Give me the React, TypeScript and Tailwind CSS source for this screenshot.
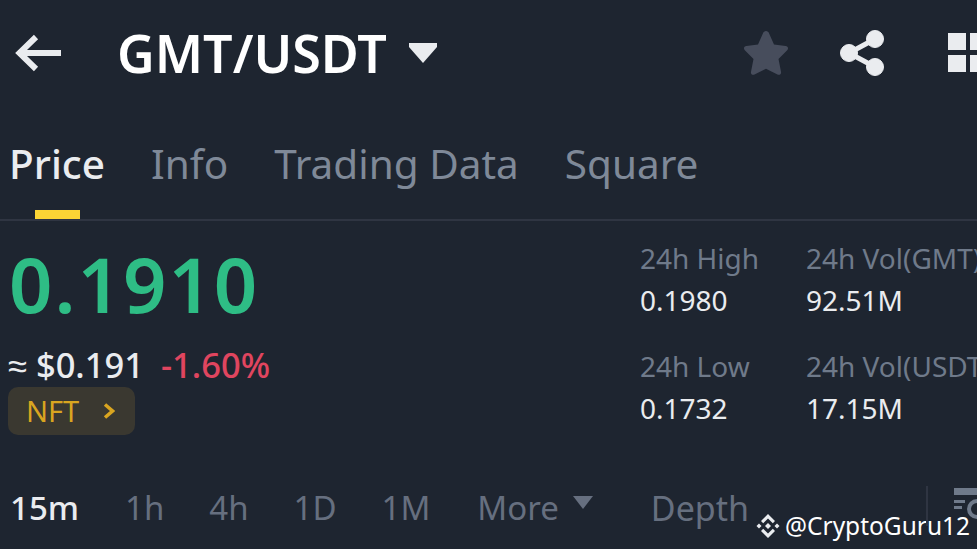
import React from "react";

const tabs = ["Info", "Trading Data", "Square"];
const intervals = ["1h", "4h", "1D", "1M"];

const Stat = ({ label, value }: { label: string; value: string }) => (
  <div className="flex flex-col whitespace-nowrap">
    <span className="text-[28px] leading-[38px] text-[#6f7a8a]">{label}</span>
    <span className="mt-[4px] text-[28px] leading-[38px] text-[#eaecef]">{value}</span>
  </div>
);

export default function App() {
  return (
    <div className="h-[549px] w-[977px] overflow-hidden bg-[#1e2530] font-['Noto_Sans',sans-serif] relative">
      {/* top bar */}
      <div className="flex h-[105px] items-center">
        <svg className="ml-[15px] w-[47px] h-[38px] shrink-0" viewBox="0 0 47 38" fill="none" stroke="#eaecef" strokeWidth="6">
          <path d="M46 19H5M21 3L4.500 19L21 35" />
        </svg>
        <span className="ml-[55px] shrink-0 text-[52px] leading-none font-semibold text-white">GMT/USDT</span>
        <svg className="ml-[21px] w-[30px] h-[22px] shrink-0" viewBox="0 0 30 22" fill="#eaecef">
          <path d="M1 1H29V5L15 21L1 5Z" />
        </svg>
        <svg className="ml-[304px] w-[48px] h-[48px] shrink-0" viewBox="0 0 48 48" fill="#474d5c">
          <path d="M24 2C25.500 2 26.500 3 27 4.200L32 15.500L43.500 17C46 17.400 46.800 19.500 45.200 21.200L36.500 30L39 42.800C39.500 45 37.600 46.500 35.500 45.500L24 39.800L12.500 45.500C10.400 46.500 8.500 45 9 42.800L11.500 30L2.800 21.200C1.200 19.500 2 17.400 4.500 17L16 15.500L21 4.200C21.500 3 22.500 2 24 2Z" />
        </svg>
        <svg className="ml-[50px] w-[46px] h-[46px] shrink-0" viewBox="0 0 46 46" fill="#eaecef" stroke="#eaecef">
          <circle cx="9" cy="23" r="8.500" />
          <circle cx="35" cy="9" r="8.500" />
          <circle cx="35" cy="37" r="8.500" />
          <path d="M9 23L35 9M9 23L35 37" strokeWidth="5" fill="none" />
        </svg>
        <div className="ml-[62px] grid shrink-0 grid-cols-[18px_18px] gap-x-[4px] gap-y-[5px]">
          <div className="h-[17px] bg-[#eaecef]" />
          <div className="h-[17px] bg-[#eaecef]" />
          <div className="h-[17px] bg-[#eaecef]" />
          <div className="h-[17px] bg-[#eaecef]" />
        </div>
      </div>

      {/* tabs */}
      <div className="flex h-[116px] items-start border-b-2 border-[#2f3542] pl-[10px] pt-[34px] text-[40.500px] leading-[50px] whitespace-nowrap">
        <div className="flex w-[94px] shrink-0 flex-col items-center">
          <span className="font-medium text-[#eaecef]">Price</span>
          <div className="mt-[21px] h-[9px] w-[45px] bg-[#fcd535]" />
        </div>
        <div className="ml-[47px] flex gap-[46px] text-[#7f8998]">
          {tabs.map((t) => (
            <span key={t}>{t}</span>
          ))}
        </div>
      </div>

      {/* price + stats */}
      <div className="flex h-[235px] items-start">
        <div className="ml-[9px] w-[631px] shrink-0">
          <div className="mt-[19px] text-[76px] leading-[88px] font-semibold text-[#2ebd85] tracking-[2px]">0.1910</div>
          <div className="mt-[15px] flex items-center text-[34.500px] leading-[44px] whitespace-nowrap -ml-[1px]">
            <span className="font-medium text-[#eaecef]">≈ $0.191</span>
            <span className="ml-[17px] font-medium text-[#e0455f]">-1.60%</span>
          </div>
          <div className="-ml-[1px] flex h-[48px] w-[127px] items-center rounded-[10px] bg-[#3a3830] pl-[18px] text-[29px] text-[#d9a520]">
            NFT
            <svg className="ml-[24px] w-[12px] h-[16px]" viewBox="0 0 12 16" fill="none" stroke="#d9a520" strokeWidth="3.500">
              <path d="M2 1.500L9.500 8L2 14.500" />
            </svg>
          </div>
        </div>
        <div className="mt-[18px] grid shrink-0 grid-cols-[166px_200px] gap-y-[28px]">
          <Stat label="24h High" value="0.1980" />
          <Stat label="24h Vol(GMT)" value="92.51M" />
          <Stat label="24h Low" value="0.1732" />
          <Stat label="24h Vol(USDT)" value="17.15M" />
        </div>
      </div>

      {/* interval row */}
      <div className="mt-[30px] flex items-center pl-[10px] text-[33px] leading-[44px] text-[#666f7f] whitespace-nowrap">
        <span className="font-medium text-[#eaecef]">15m</span>
        <div className="ml-[46px] flex gap-[45px]">
          {intervals.map((t) => (
            <span key={t}>{t}</span>
          ))}
        </div>
        <span className="ml-[47px]">More</span>
        <svg className="ml-[14px] mb-[10px] w-[20px] h-[14px] shrink-0" viewBox="0 0 20 14" fill="#666f7f">
          <path d="M0 0H20L10 13Z" />
        </svg>
        <span className="ml-[58px] text-[34px]">Depth</span>
      </div>

      {/* watermark */}
      <div className="absolute left-[754px] top-[511px] flex items-center text-[24.500px] leading-[30px] text-white">
        <svg className="w-[28px] h-[28px] shrink-0" viewBox="0 0 28 28" fill="#eaecef">
          <path d="M14 11L17 14L14 17L11 14Z" />
          <path d="M14 2L21 9L18.800 11.200L14 6.400L9.200 11.200L7 9Z" />
          <path d="M14 26L21 19L18.800 16.800L14 21.600L9.200 16.800L7 19Z" />
          <path d="M5 11.500L7.500 14L5 16.500L2.500 14Z" />
          <path d="M23 11.500L25.500 14L23 16.500L20.500 14Z" />
        </svg>
        <span className="ml-[3px]">@CryptoGuru12</span>
      </div>
      {/* chart tool cut off at the right edge */}
      <div className="absolute left-[926px] top-[486px] h-[40px] w-[2px] bg-[#2f3542]" />
      <div className="absolute left-[954px] top-[488px] h-[7px] w-[23px] bg-[#6f7a8a]" />
      <div className="absolute left-[954px] top-[500px] h-[3px] w-[11px] bg-[#6f7a8a]" />
      <div className="absolute left-[954px] top-[506px] h-[3px] w-[8px] bg-[#6f7a8a]" />
      <div className="absolute left-[967px] top-[499px] h-[20px] w-[20px] rounded-full border-[4px] border-[#6f7a8a]" />
    </div>
  );
}
